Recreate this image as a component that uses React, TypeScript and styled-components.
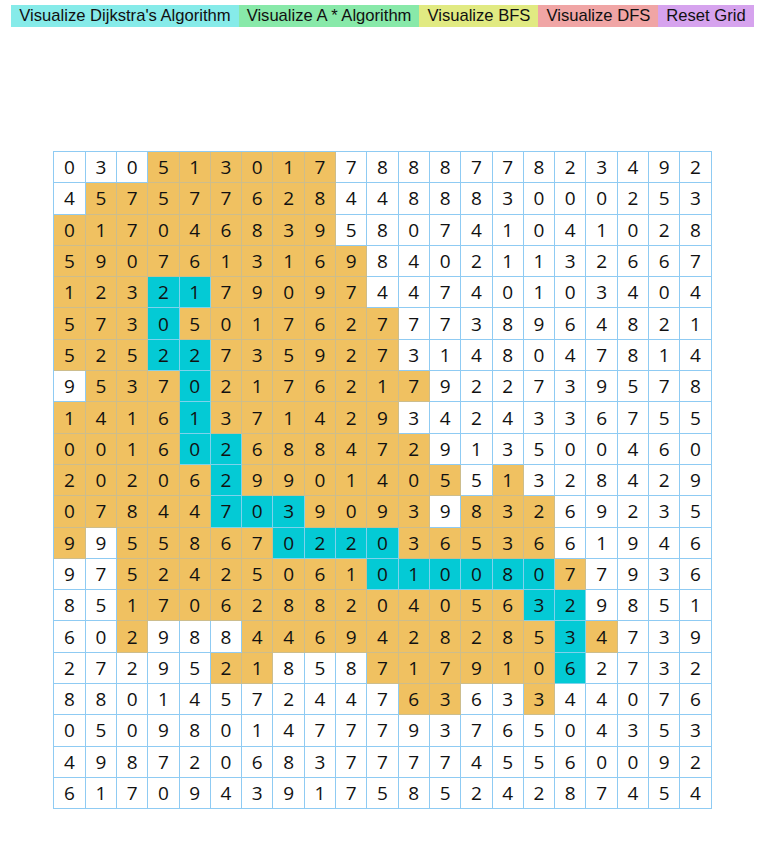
import styled, { createGlobalStyle } from "styled-components";

const digits = [
  "030513017788877823492",
  "457577628448883000253",
  "017046839580741041028",
  "590761316984021132667",
  "123217909744740103404",
  "573050176277738964821",
  "525227359273148047814",
  "953702176217922739578",
  "141613714293424336755",
  "001602688472913500460",
  "202062990140551328429",
  "078447039093983269235",
  "995586702203653661946",
  "975242506101008077936",
  "851706288204056329851",
  "602988446942828534739",
  "272952185871791062732",
  "880145724476363344076",
  "050980147779376504353",
  "498720683777745560092",
  "617094391758524287454",
];

// 0 = unvisited, 1 = visited, 2 = path
const states = [
  "000111111000000000000",
  "011111111000000000000",
  "111111111000000000000",
  "111111111100000000000",
  "111221111100000000000",
  "111211111110000000000",
  "111221111110000000000",
  "011121111111000000000",
  "111121111110000000000",
  "111122111111000000000",
  "111112111111101000000",
  "111112221111011100000",
  "101111122221111100000",
  "001111111122222210000",
  "001111111111111220000",
  "001000111111111121000",
  "000001100011111120000",
  "000000000001100100000",
  "000000000000000000000",
  "000000000000000000000",
  "000000000000000000000",
];

const buttons = [
  { label: "Visualize Dijkstra's Algorithm", color: "#86ebe9" },
  { label: "Visualize A * Algorithm", color: "#88e9a9" },
  { label: "Visualize BFS", color: "#e1ea82" },
  { label: "Visualize DFS", color: "#f0a5a5" },
  { label: "Reset Grid", color: "#d6a3ee" },
];

const GlobalStyle = createGlobalStyle`
  body {
    margin: 0;
    background: #ffffff;
    font-family: "Liberation Sans", Arial, sans-serif;
  }
`;

const Page = styled.div`
  display: flex;
  flex-direction: column;
  align-items: center;
  padding-top: 5px;
`;

const Toolbar = styled.div`
  display: flex;
`;

const Button = styled.button<{ $bg: string }>`
  height: 22px;
  padding: 0 8px;
  border: none;
  background: ${(p) => p.$bg};
  color: #111;
  font-family: "Liberation Sans", Arial, sans-serif;
  font-size: 16.6px;
  line-height: 22px;
  cursor: pointer;
`;

const Board = styled.div`
  margin-top: 124px;
  display: grid;
  grid-template-columns: repeat(21, 31.3px);
  grid-auto-rows: 31.3px;
  border-left: 1px solid #8fcbf3;
  border-top: 1px solid #8fcbf3;
`;

const cellBg = ["#ffffff", "#f0c161", "#04cad5"];
const cellLine = ["#8fcbf3", "#cdbd8c", "#7fd2ec"];

const Cell = styled.div<{ $state: number }>`
  box-sizing: border-box;
  display: flex;
  align-items: center;
  justify-content: center;
  background: ${(p) => cellBg[p.$state]};
  border-right: 1px solid ${(p) => cellLine[p.$state]};
  border-bottom: 1px solid ${(p) => cellLine[p.$state]};
  font-family: "Open Sans", "Noto Sans", sans-serif;
  font-size: 19px;
  color: #111;
`;

export default function App() {
  return (
    <>
      <GlobalStyle />
      <Page>
        <Toolbar>
          {buttons.map((b) => (
            <Button key={b.label} $bg={b.color}>
              {b.label}
            </Button>
          ))}
        </Toolbar>
        <Board>
          {digits.map((row, r) =>
            row.split("").map((d, c) => (
              <Cell key={`${r}-${c}`} $state={Number(states[r][c])}>
                {d}
              </Cell>
            ))
          )}
        </Board>
      </Page>
    </>
  );
}
